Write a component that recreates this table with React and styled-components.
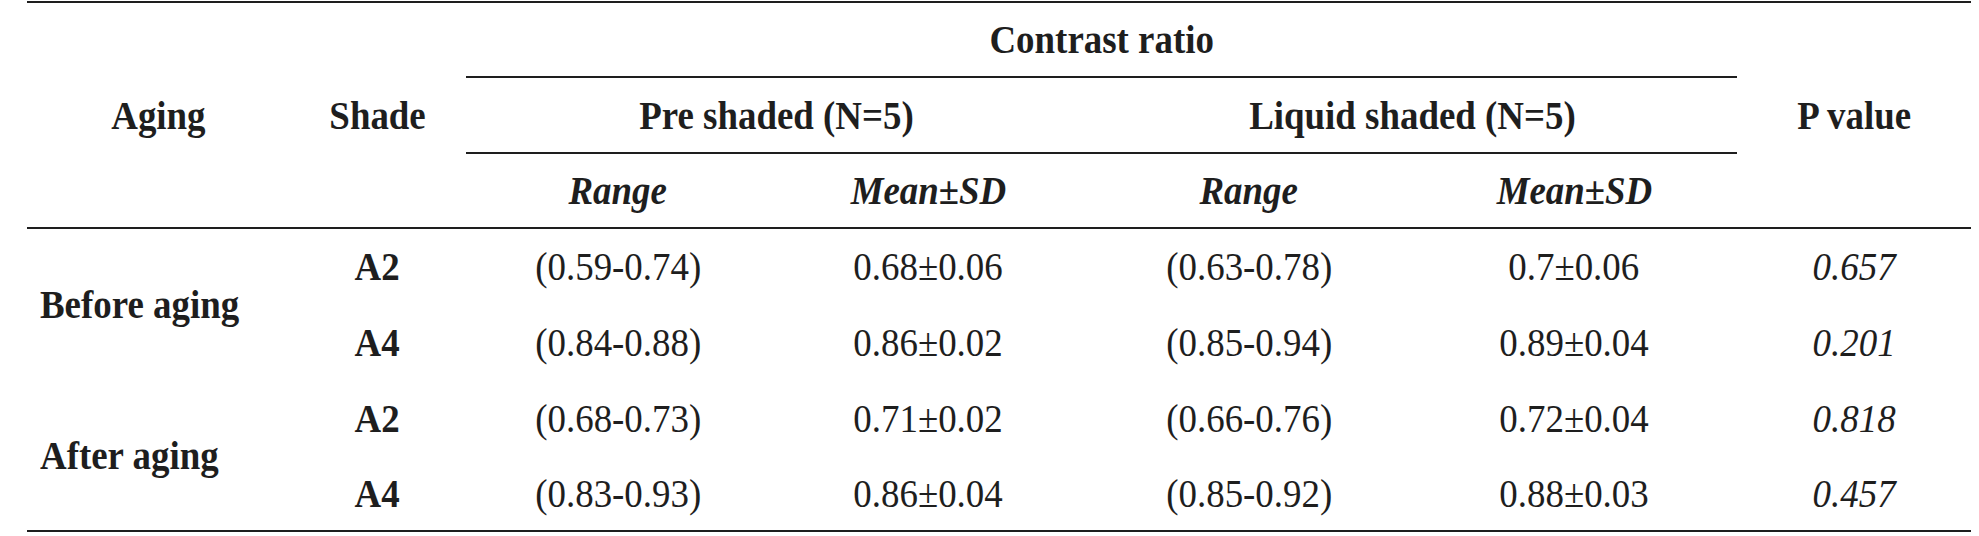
import React from "react";
import styled, { createGlobalStyle } from "styled-components";

const Global = createGlobalStyle`
  html, body { margin: 0; padding: 0; background: #ffffff; }
  body { font-family: "Liberation Serif", "Times New Roman", serif; color: #1e1e1e; }
`;

const Page = styled.div`
  padding: 1px 8px 0 27px;
  width: 1979px;
  box-sizing: border-box;
`;

const Table = styled.table`
  border-collapse: collapse;
  table-layout: fixed;
  width: 1944px;
  font-family: "Liberation Serif", "Times New Roman", serif;
  font-size: 41px;
  line-height: 1;
  color: #1e1e1e;
  border-top: 2px solid #1e1e1e;
  border-bottom: 2px solid #1e1e1e;
`;

const Head = styled.thead`
  border-bottom: 2px solid #1e1e1e;
`;

const Row = styled.tr`
  height: ${(p) => p.$h}px;
`;

const HeadCell = styled.th`
  padding: 0;
  font-weight: 700;
  font-style: ${(p) => (p.$italic ? "italic" : "normal")};
  text-align: center;
  vertical-align: middle;
  border-bottom: ${(p) => (p.$rule ? "2px solid #1e1e1e" : "none")};
`;

const LabelCell = styled.td`
  padding: 0 0 0 13px;
  font-weight: 700;
  text-align: left;
  vertical-align: middle;
`;

const ShadeCell = styled.td`
  padding: 0;
  font-weight: 700;
  text-align: center;
  vertical-align: middle;
`;

const Cell = styled.td`
  padding: 0;
  font-weight: 400;
  font-style: ${(p) => (p.$italic ? "italic" : "normal")};
  text-align: center;
  vertical-align: middle;
`;

/* condensed Times look of the printed table */
const Txt = styled.span`
  display: inline-block;
  white-space: nowrap;
  transform: scaleX(0.9);
  transform-origin: ${(p) => (p.$left ? "left center" : "center center")};
`;

const widths = [262, 177, 304, 317, 324, 326, 234];

const groups = [
  {
    label: "Before aging",
    rows: [
      { shade: "A2", v: ["(0.59-0.74)", "0.68±0.06", "(0.63-0.78)", "0.7±0.06"], p: "0.657" },
      { shade: "A4", v: ["(0.84-0.88)", "0.86±0.02", "(0.85-0.94)", "0.89±0.04"], p: "0.201" },
    ],
  },
  {
    label: "After aging",
    rows: [
      { shade: "A2", v: ["(0.68-0.73)", "0.71±0.02", "(0.66-0.76)", "0.72±0.04"], p: "0.818" },
      { shade: "A4", v: ["(0.83-0.93)", "0.86±0.04", "(0.85-0.92)", "0.88±0.03"], p: "0.457" },
    ],
  },
];

const bodyHeights = [76, 76, 76, 75];

export default function App() {
  let idx = 0;
  return (
    <Page>
      <Global />
      <Table>
        <colgroup>
          {widths.map((w, i) => (
            <col key={i} style={{ width: w }} />
          ))}
        </colgroup>
        <Head>
          <Row $h={75}>
            <HeadCell rowSpan={3}><Txt>Aging</Txt></HeadCell>
            <HeadCell rowSpan={3}><Txt>Shade</Txt></HeadCell>
            <HeadCell colSpan={4} $rule><Txt>Contrast ratio</Txt></HeadCell>
            <HeadCell rowSpan={3}><Txt>P value</Txt></HeadCell>
          </Row>
          <Row $h={76}>
            <HeadCell colSpan={2} $rule><Txt>Pre shaded (N=5)</Txt></HeadCell>
            <HeadCell colSpan={2} $rule><Txt>Liquid shaded (N=5)</Txt></HeadCell>
          </Row>
          <Row $h={75}>
            <HeadCell $italic><Txt>Range</Txt></HeadCell>
            <HeadCell $italic><Txt>Mean±SD</Txt></HeadCell>
            <HeadCell $italic><Txt>Range</Txt></HeadCell>
            <HeadCell $italic><Txt>Mean±SD</Txt></HeadCell>
          </Row>
        </Head>
        <tbody>
          {groups.map((g) =>
            g.rows.map((r, j) => {
              const h = bodyHeights[idx++];
              return (
                <Row $h={h} key={g.label + j}>
                  {j === 0 && (
                    <LabelCell rowSpan={2}>
                      <Txt $left>{g.label}</Txt>
                    </LabelCell>
                  )}
                  <ShadeCell><Txt>{r.shade}</Txt></ShadeCell>
                  {r.v.map((v, k) => (
                    <Cell key={k}><Txt>{v}</Txt></Cell>
                  ))}
                  <Cell $italic><Txt>{r.p}</Txt></Cell>
                </Row>
              );
            })
          )}
        </tbody>
      </Table>
    </Page>
  );
}
